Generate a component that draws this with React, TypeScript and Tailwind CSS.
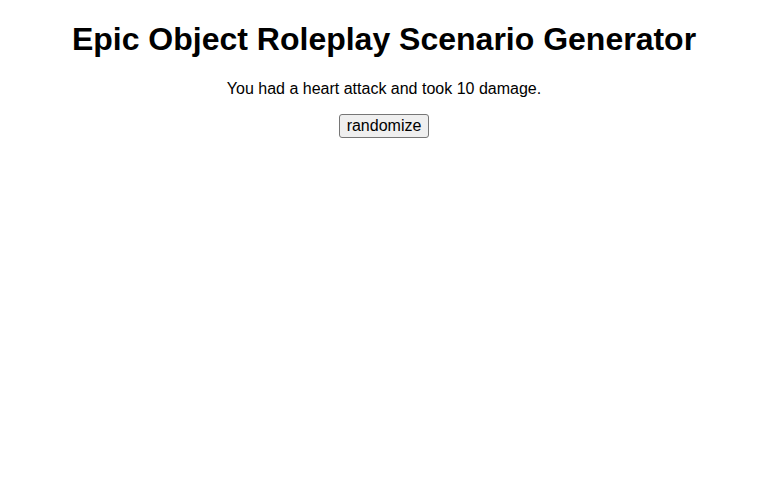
import React, { useState } from "react";

const events = [
  "You had a heart attack and took 10 damage.",
  "You tripped over a pencil and took 5 damage.",
  "A stapler bit you and you took 8 damage.",
  "You found a healing potion and gained 15 health.",
];

export default function App() {
  const [idx, setIdx] = useState(0);

  return (
    <div className="min-h-screen bg-white text-center text-black font-['Liberation_Sans',Arial,sans-serif]">
      <h1 className="pt-[21px] text-[32px] leading-[37px] font-bold">Epic Object Roleplay Scenario Generator</h1>
      <p className="mt-[22px] text-base leading-[18px]">{events[idx]}</p>
      <button
        onClick={() => setIdx((idx + 1) % events.length)}
        className="mt-4 px-[7px] py-[2px] text-base leading-[18px] bg-[#efefef] border border-[#767676] rounded-[3px] hover:bg-[#e5e5e5]"
      >
        randomize
      </button>
    </div>
  );
}
